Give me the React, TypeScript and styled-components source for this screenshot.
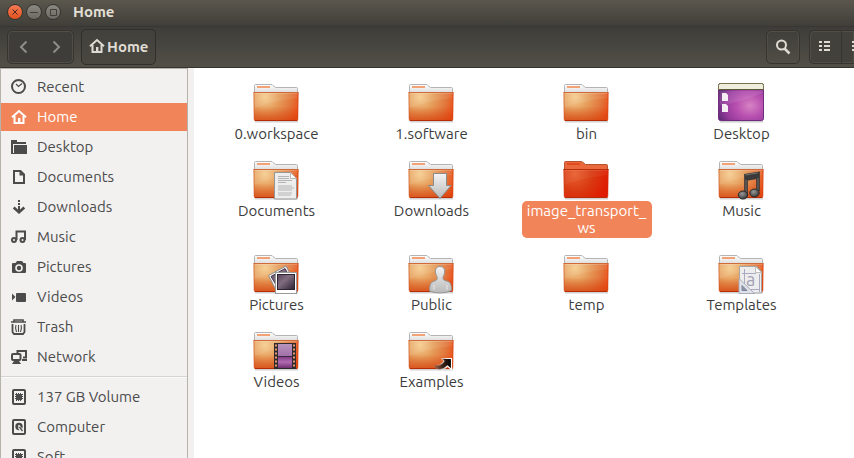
import React from "react";
import styled, { createGlobalStyle } from "styled-components";

const GlobalStyle = createGlobalStyle`
  * { box-sizing: border-box; }
  body {
    margin: 0;
    background: #fff;
    font-family: Ubuntu, "Noto Sans", sans-serif;
    font-size: 15px;
    color: #3c3c3c;
  }
  button { font: inherit; color: inherit; border: 0; background: none; padding: 0; margin: 0; }
  a { color: inherit; text-decoration: none; }
  svg { display: block; flex: none; }
`;

const Window = styled.div`
  height: 100vh;
  display: flex;
  flex-direction: column;
  overflow: hidden;
`;

const TitleBar = styled.header`
  flex: none;
  height: 26px;
  padding: 0 7px 2px;
  display: flex;
  align-items: center;
  gap: 3px;
  background: linear-gradient(#5b574d, #403e39);
  color: #e2dfd6;
`;

const WindowButton = styled.button<{ $close?: boolean }>`
  width: 16px;
  height: 16px;
  border-radius: 8px;
  border: 1px solid #35342f;
  background: ${(p) => (p.$close ? "linear-gradient(#f47a55, #e2531f)" : "linear-gradient(#8b8981, #6b6962)")};
  display: grid;
  place-items: center;
`;

const Title = styled.h1`
  margin: 0 0 0 9px;
  font-size: 15px;
  line-height: 20px;
  font-weight: 700;
`;

const Toolbar = styled.div`
  flex: none;
  height: 42px;
  padding: 3px 0 3px 7px;
  display: flex;
  align-items: center;
  border-top: 1px solid #383733;
  border-bottom: 1px solid #35342f;
  background: linear-gradient(#3e3d39, #524f47);
  color: #dfdbd2;
  overflow: hidden;
`;

const Group = styled.div`
  display: flex;
  height: 34px;
  border: 1px solid #35342f;
  border-radius: 5px;
  box-shadow: inset 0 0 0 1px #504e47;
  background: #42413c;
  overflow: hidden;
`;

const NavGroup = styled(Group)`
  width: 67px;
  background: #3e3d39;
  color: #8f8d86;
`;

const ViewGroup = styled(Group)`
  flex: none;
  width: 45px;
  margin-left: 9px;
  border-right: 0;
  border-radius: 5px 0 0 5px;
`;

const ToolButton = styled.button<{ $divided?: boolean }>`
  flex: none;
  width: 32px;
  display: grid;
  place-items: center;
  border-left: ${(p) => (p.$divided ? "1px solid #35342f" : "0")};
`;

const ViewButton = styled(ToolButton)`
  width: 31px;
`;

const PathButton = styled.button`
  height: 36px;
  margin-left: 7px;
  padding: 0 7px 2px;
  display: flex;
  align-items: center;
  gap: 2px;
  border: 1px solid #302f2b;
  border-radius: 5px;
  background: linear-gradient(#42413c, #494740);
  font-weight: 700;
`;

const SearchButton = styled.button`
  width: 34px;
  height: 34px;
  margin-left: auto;
  display: grid;
  place-items: center;
  border: 1px solid #35342f;
  border-radius: 5px;
  box-shadow: inset 0 0 0 1px #504e47;
`;

const Body = styled.div`
  flex: 1;
  min-height: 0;
  display: flex;
`;

const Sidebar = styled.nav`
  flex: none;
  width: 188px;
  padding-top: 3px;
  border: 1px solid #b6b3ad;
  border-bottom: 0;
  background: #f2f1f0;
  overflow: hidden;
`;

const Handle = styled.div`
  flex: none;
  width: 6px;
  background: #f2f1f0;
`;

const Place = styled.a<{ $active?: boolean }>`
  height: 28px;
  margin: 1px 0 2px;
  padding-left: 10px;
  display: flex;
  align-items: center;
  gap: 10px;
  line-height: 20px;
  white-space: nowrap;
  background: ${(p) => (p.$active ? "#f28459" : "transparent")};
  color: ${(p) => (p.$active ? "#fff" : "#4b4b4b")};
`;

const Separator = styled.hr`
  height: 2px;
  margin: 5px 0;
  border: 0;
  border-top: 1px solid #d6d4d1;
  background: #fafafa;
`;

const Files = styled.main`
  flex: 1;
  min-width: 0;
  padding: 15px 0 0 5px;
  display: grid;
  grid-template-columns: repeat(auto-fill, 155px);
  align-content: start;
  row-gap: 16px;
  overflow: hidden;
`;

const File = styled.button`
  display: flex;
  flex-direction: column;
  align-items: center;
`;

const Label = styled.span<{ $selected?: boolean }>`
  max-width: 130px;
  margin-top: 1px;
  padding: 1px 3px 2px;
  line-height: 17px;
  border-radius: 5px;
  background: ${(p) => (p.$selected ? "#f28459" : "transparent")};
  color: ${(p) => (p.$selected ? "#fff" : "#3c3c3c")};
`;

const Sym = ({ children }: { children: React.ReactNode }) => (
  <svg width="16" height="16" viewBox="0 0 16 16" fill="none" stroke="currentColor" strokeWidth="2">
    {children}
  </svg>
);

const HomeIcon = () => (
  <Sym>
    <path d="M1 8.2 8 2l7 6.2" />
    <path d="M3.5 7v7h9V7" />
    <path d="M7 9h2.4v5H7z" fill="currentColor" stroke="none" />
  </Sym>
);

const Chip = () => (
  <Sym>
    <rect x="2" y="1" width="12" height="14" rx="1" />
    <path d="M5 5h6v6H5z" fill="currentColor" stroke="none" />
    <path d="M5.500 4v8M7.500 4v8M9.500 4v8M4 5.500h8M4 7.500h8M4 9.500h8" strokeWidth="1" />
  </Sym>
);

const placeIcons: Record<string, React.ReactNode> = {
  Recent: (
    <Sym>
      <circle cx="7.5" cy="7.5" r="6.500" />
      <path d="m5 5 2.5 2.5L11 4.5" strokeWidth="1.2" />
    </Sym>
  ),
  Home: <HomeIcon />,
  Desktop: (
    <Sym>
      <path d="M0 1h6v2h9v2H3v10H0z" fill="currentColor" stroke="none" />
      <path d="M3 6h13v9H3z" fill="currentColor" stroke="none" />
      <path d="M2.5 5v9" stroke="#f2f1f0" strokeWidth="1" />
    </Sym>
  ),
  Documents: (
    <Sym>
      <path d="M3 2h6.5L13 5.500V14H3z" />
      <path d="M8.500 2v4.500H13z" fill="currentColor" stroke="none" />
    </Sym>
  ),
  Downloads: (
    <Sym>
      <path d="M8 1v2M8 4v2M8 7v5" />
      <path d="m2.700 8.500 5.300 4.800 5.300-4.800" strokeWidth="2.600" />
    </Sym>
  ),
  Music: (
    <Sym>
      <circle cx="3" cy="11" r="2" />
      <circle cx="11.500" cy="11" r="2" />
      <path d="M5.500 11V2.500h8.500V11" />
    </Sym>
  ),
  Pictures: (
    <Sym>
      <path d="M2 4h2.500L6 2h5l1.500 2H14q1 0 1 1v8q0 1-1 1H2q-1 0-1-1V5q0-1 1-1z" fill="currentColor" stroke="none" />
      <circle cx="8" cy="9" r="3" stroke="#f2f1f0" strokeWidth="1.600" />
    </Sym>
  ),
  Videos: (
    <Sym>
      <path d="M1 4.500 4.500 8 1 11.500z" fill="currentColor" stroke="none" />
      <rect x="5" y="4" width="10" height="9" rx="1" fill="currentColor" stroke="none" />
    </Sym>
  ),
  Trash: (
    <Sym>
      <path d="M0 3h15M3 2.500V1h9v1.500" strokeWidth="1.600" />
      <path d="M1.500 5v8l1.500 2h9l1.500-2V5" strokeWidth="1.800" />
      <path d="M5 6q-1.200 3 .5 7M7.500 6v7M10 6q1.200 3-.5 7" strokeWidth="1.100" />
    </Sym>
  ),
  Network: (
    <Sym>
      <path d="M6.500 4V2H15V8.500h-3" />
      <path d="M11 10h5v2h-5z" fill="currentColor" stroke="none" />
      <rect x="1" y="5" width="8.500" height="6" rx="1" />
      <path d="M3 12h5l2 3H1z" fill="currentColor" stroke="none" />
    </Sym>
  ),
  "137 GB Volume": <Chip />,
  Computer: (
    <Sym>
      <rect x="2" y="1" width="12" height="14" rx="1" />
      <circle cx="8" cy="7.500" r="3.700" fill="currentColor" stroke="none" />
      <path d="m8 8 4 5" stroke="#f2f1f0" strokeWidth="3" />
      <path d="m8.500 8 3 4" strokeWidth="1.300" />
      <circle cx="8" cy="7" r="1" fill="#f2f1f0" stroke="none" />
    </Sym>
  ),
  Soft: <Chip />,
};

const places = ["Recent", "Home", "Desktop", "Documents", "Downloads", "Music", "Pictures", "Videos", "Trash", "Network"];
const devices = ["137 GB Volume", "Computer", "Soft"];

const HiddenSvg = styled.svg`
  position: absolute;
`;

const Gradients = () => (
  <HiddenSvg width="0" height="0" aria-hidden="true">
    <defs>
      <radialGradient id="front" gradientUnits="userSpaceOnUse" cx="12" cy="14" r="37">
        <stop offset="0" stopColor="#f5cd90" />
        <stop offset=".4" stopColor="#e59b59" />
        <stop offset=".75" stopColor="#e27238" />
        <stop offset="1" stopColor="#f04a14" />
      </radialGradient>
      <radialGradient id="frontSel" gradientUnits="userSpaceOnUse" cx="12" cy="14" r="34">
        <stop offset="0" stopColor="#e8602f" />
        <stop offset=".5" stopColor="#d93b12" />
        <stop offset="1" stopColor="#df1c02" />
      </radialGradient>
      <linearGradient id="shade" x1="0" y1="0" x2="0" y2="1">
        <stop offset=".5" stopColor="#d8480f" stopOpacity="0" />
        <stop offset="1" stopColor="#d4440f" stopOpacity=".7" />
      </linearGradient>
      <linearGradient id="back" x1="0" y1="0" x2="0" y2="1">
        <stop offset="0" stopColor="#fff" />
        <stop offset="1" stopColor="#dcdcdc" />
      </linearGradient>
      <radialGradient id="desk" cx=".7" cy=".6" r=".75">
        <stop offset="0" stopColor="#d783c3" />
        <stop offset=".4" stopColor="#b850b0" />
        <stop offset=".75" stopColor="#963a9c" />
        <stop offset="1" stopColor="#632d78" />
      </radialGradient>
      <linearGradient id="silver" x1="0" y1="0" x2="0" y2="1">
        <stop offset="0" stopColor="#f4f4f4" />
        <stop offset="1" stopColor="#b9b9b9" />
      </linearGradient>
      <linearGradient id="photo" x1="0" y1="0" x2="1" y2="1">
        <stop offset="0" stopColor="#5b4258" />
        <stop offset=".4" stopColor="#806d80" />
        <stop offset="1" stopColor="#2e2033" />
      </linearGradient>
      <linearGradient id="film" x1="0" y1="0" x2="0" y2="1">
        <stop offset="0" stopColor="#b795bd" />
        <stop offset=".5" stopColor="#a271a8" />
        <stop offset=".52" stopColor="#7c3a80" />
        <stop offset=".75" stopColor="#b26bb2" />
        <stop offset="1" stopColor="#70306f" />
      </linearGradient>
      <radialGradient id="note" cx=".4" cy=".35" r=".7">
        <stop offset="0" stopColor="#999" />
        <stop offset="1" stopColor="#333" />
      </radialGradient>
      <linearGradient id="arrow" x1="0" y1="0" x2="1" y2="0">
        <stop offset="0" stopColor="#b06a4c" />
        <stop offset=".5" stopColor="#3a2118" />
        <stop offset="1" stopColor="#000" />
      </linearGradient>
      <linearGradient id="arrowEdge" x1="0" y1="0" x2="1" y2="0">
        <stop offset=".1" stopColor="#fff" stopOpacity="0" />
        <stop offset=".8" stopColor="#fff" />
      </linearGradient>
    </defs>
  </HiddenSvg>
);

const Folder = ({ selected, children }: { selected?: boolean; children?: React.ReactNode }) => (
  <svg width="49" height="40" viewBox="-1 0 49 40">
    <path d="M2 38.500h43" stroke="#000" strokeOpacity=".18" strokeWidth="2" />
    <path
      d="M1.500 10V2.500q0-1 1-1H18q1.500 0 2 1L22.500 4.500H43.500q1 0 1 1V10z"
      fill={selected ? "#e9693c" : "url(#back)"}
      stroke={selected ? "#b5532f" : "#b4b4b8"}
    />
    <path d="M4 4h13" stroke={selected ? "#e14a1c" : "#f2a274"} strokeWidth="2" />
    <path d="M.5 9h45l-.6 27.500q0 1.500-1.400 1.500h-41q-1.400 0-1.400-1.500z" fill={selected ? "url(#frontSel)" : "url(#front)"} />
    {!selected && <path d="M.5 9h45l-.6 27.500q0 1.500-1.400 1.500h-41q-1.400 0-1.400-1.500z" fill="url(#shade)" />}
    <path d="M1.500 10h43v5Q23 17 1.500 25z" fill="#fff" opacity={selected ? ".05" : ".08"} />
    <path d="M.5 9.500h45" stroke={selected ? "#b92c08" : "#cf6a3a"} />
    <path d="M1 10v26.500M45 10v26.500" stroke="#c43a0e" strokeOpacity=".45" />
    <path d="M1.500 10.500h43" stroke="#fff" strokeOpacity={selected ? ".1" : ".18"} />
    <path d="M2 37.500h42" stroke="#b92c08" />
    {children}
  </svg>
);

const DesktopIcon = () => (
  <svg width="49" height="40" viewBox="-1 0 49 40">
    <path d="M2 38.500h43" stroke="#000" strokeOpacity=".2" strokeWidth="2" />
    <rect x=".5" y=".5" width="45" height="37" rx="2" fill="url(#desk)" stroke="#702c7d" />
    <path d="M1.500 8v14Q22 20 44.500 10V8z" fill="#fff" opacity=".1" />
    <path d="M.5 6.500v-4q0-2 2-2h41q2 0 2 2v4z" fill="#efeedd" stroke="#77754d" />
    <path d="M1 6.500h44" stroke="#5b5937" strokeWidth="1" />
    <path d="M4 10h4l2 2v6H4zM4 21h4l2 2v6H4z" fill="#f4eef4" />
  </svg>
);

const TextFolder = () => (
  <Folder>
    <path d="M21.500 12.500h16l6 6v20.500h-22z" fill="#ededed" stroke="#969696" />
    <path d="M37.500 12.500v6h6z" fill="#fff" stroke="#b5b5b5" />
    <path d="M25 16.500h11M25 18.500h11M25 20.500h14M25 22.500h8M25 26h14M25 28h16M25 30h14M25 33h14M25 35h13" stroke="#b4b4b4" />
  </Folder>
);

const DownloadFolder = () => (
  <Folder>
    <path d="M25.500 13.500h13v12h4.500L32 38.500 20.500 25.500h5z" fill="url(#silver)" stroke="#8a8a8a" />
  </Folder>
);

const MusicFolder = () => (
  <Folder>
    <path d="M28 34V15.500l12-2V31" fill="none" stroke="#333" strokeWidth="3.600" />
    <path d="m27 18 14-2.500" stroke="#3a3a3a" strokeWidth="6" />
    <path d="M27.500 15 40 12.800M28 20v13M40 18v12" fill="none" stroke="#777" />
    <ellipse cx="25" cy="35" rx="4.700" ry="4" fill="url(#note)" stroke="#292929" />
    <ellipse cx="36.500" cy="33" rx="4.700" ry="4" fill="url(#note)" stroke="#292929" />
  </Folder>
);

const PictureFolder = () => (
  <Folder>
    <path d="M15.500 21.500 33 12l7.500 14-17.500 10z" fill="#f4f4f4" stroke="#8c8c8c" />
    <path d="M18 22.500 32 14.500l5 9-13.500 8z" fill="url(#photo)" stroke="#48364b" />
    <rect x="22.500" y="18.500" width="21" height="21" fill="#fff" stroke="#9a9a9a" />
    <rect x="24.500" y="20.500" width="17" height="15" fill="url(#photo)" stroke="#2d2231" />
  </Folder>
);

const PublicFolder = () => (
  <Folder>
    <path
      d="M32 12.500c3.500 0 5 2.500 4.700 5.500-.3 3-1.400 4-1.700 5.500-.3 2 1 3 4 3.700 3.500.8 4.500 3.500 4.500 9.300q-5 2.500-11.500 2.500T21.500 37c0-6 1-8.800 4.500-9.800 2.500-.7 3.500-1.700 3.200-3.700-.3-1.500-1.400-2.500-1.700-5.500-.3-3 1-5.500 4.500-5.500z"
      fill="url(#silver)"
      stroke="#969696"
    />
    <path d="M26 31v5M39 31v5" stroke="#fff" strokeOpacity=".6" />
  </Folder>
);

const TemplateText = styled.text`
  font-family: Ubuntu, "Noto Sans", sans-serif;
  font-size: 18px;
  fill: #a0a0b6;
`;

const TemplateFolder = () => (
  <Folder>
    <path d="M21.500 12.500h17l5 5v21.500h-22z" fill="#ededed" stroke="#a5a5a5" />
    <path d="M37.500 12.500v6h6z" fill="#fff" stroke="#bcbcbc" />
    <path d="M26.500 15v22M41.500 20v18M24 19.500h14M28 35.500h14" stroke="#a9a9c2" />
    <TemplateText x="28" y="32">a</TemplateText>
    <path d="M21 24.500v15h15.500z" fill="#dfe2e8" stroke="#a8abbb" />
    <path d="M24 31.500V36.500h5z" fill="#8f94ab" stroke="#7d8299" />
  </Folder>
);

const VideoFolder = () => (
  <Folder>
    <rect x="21" y="12" width="22" height="26" fill="#2e2a2e" />
    <rect x="25" y="13" width="14" height="24" fill="url(#film)" />
    <path d="M25 25.500h14" stroke="#3b273d" />
    <path d="M23 13.500v24M41 13.500v24" stroke="#e79a72" strokeWidth="2" strokeDasharray="2 2" />
  </Folder>
);

const LinkFolder = () => (
  <Folder>
    <path
      d="M34 27.500h9.500v11L39.500 35q-4 4-8.500 3.500-4.500-.5-5-5 4 2.500 8.500-1.500.8-.8 1.500-2z"
      fill="url(#arrow)"
      stroke="url(#arrowEdge)"
      strokeWidth="1.200"
    />
  </Folder>
);

const files: { name: string; icon: React.ReactNode; selected?: boolean }[] = [
  { name: "0.workspace", icon: <Folder /> },
  { name: "1.software", icon: <Folder /> },
  { name: "bin", icon: <Folder /> },
  { name: "Desktop", icon: <DesktopIcon /> },
  { name: "Documents", icon: <TextFolder /> },
  { name: "Downloads", icon: <DownloadFolder /> },
  { name: "image_transport_ws", icon: <Folder selected />, selected: true },
  { name: "Music", icon: <MusicFolder /> },
  { name: "Pictures", icon: <PictureFolder /> },
  { name: "Public", icon: <PublicFolder /> },
  { name: "temp", icon: <Folder /> },
  { name: "Templates", icon: <TemplateFolder /> },
  { name: "Videos", icon: <VideoFolder /> },
  { name: "Examples", icon: <LinkFolder /> },
];

const Breakable = ({ text }: { text: string }) => {
  const cut = text.lastIndexOf("_") + 1;
  return (
    <>
      {text.slice(0, cut)}
      {cut > 0 && <wbr />}
      {text.slice(cut)}
    </>
  );
};

const PlaceLink = ({ name, active }: { name: string; active?: boolean }) => (
  <Place href={`#${encodeURIComponent(name)}`} $active={active}>
    {placeIcons[name]}
    {name}
  </Place>
);

export default function App() {
  return (
    <Window>
      <GlobalStyle />
      <Gradients />
      <TitleBar>
        <WindowButton $close aria-label="Close">
          <svg width="8" height="8" viewBox="0 0 8 8" stroke="#4a2a1e">
            <path d="m1.500 1.500 5 5m0-5-5 5" />
          </svg>
        </WindowButton>
        <WindowButton aria-label="Minimize">
          <svg width="8" height="8" viewBox="0 0 8 8" stroke="#403f3a">
            <path d="M0 4.500h8" />
          </svg>
        </WindowButton>
        <WindowButton aria-label="Maximize">
          <svg width="8" height="8" viewBox="0 0 8 8" fill="none" stroke="#403f3a">
            <path d="M1.500 1.500h6v6h-6z" />
          </svg>
        </WindowButton>
        <Title>Home</Title>
      </TitleBar>
      <Toolbar>
        <NavGroup>
          <ToolButton aria-label="Back">
            <Sym>
              <path d="M10.500 2.500 5 8l5.500 5.500" />
            </Sym>
          </ToolButton>
          <ToolButton aria-label="Forward">
            <Sym>
              <path d="M5.500 2.500 11 8l-5.500 5.500" />
            </Sym>
          </ToolButton>
        </NavGroup>
        <PathButton>
          <HomeIcon />
          Home
        </PathButton>
        <SearchButton aria-label="Search">
          <Sym>
            <circle cx="6.500" cy="6" r="4.500" />
            <path d="m9.500 9.500 5 5" strokeWidth="2.500" />
          </Sym>
        </SearchButton>
        <ViewGroup>
          <ViewButton aria-label="List view">
            <Sym>
              <path d="M1 3h3M6 3h6M1 7h3M6 7h6M1 11h3M6 11h6" />
            </Sym>
          </ViewButton>
          <ViewButton $divided aria-label="Grid view">
            <Sym>
              <path d="M3 3h3M8 3h3M13 3h3M3 7h3M8 7h3M13 7h3M3 11h3M8 11h3M13 11h3" />
            </Sym>
          </ViewButton>
        </ViewGroup>
      </Toolbar>
      <Body>
        <Sidebar aria-label="Places">
          {places.map((name) => (
            <PlaceLink key={name} name={name} active={name === "Home"} />
          ))}
          <Separator />
          {devices.map((name) => (
            <PlaceLink key={name} name={name} />
          ))}
        </Sidebar>
        <Handle />
        <Files>
          {files.map((f) => (
            <File key={f.name}>
              {f.icon}
              <Label $selected={f.selected}>
                <Breakable text={f.name} />
              </Label>
            </File>
          ))}
        </Files>
      </Body>
    </Window>
  );
}
